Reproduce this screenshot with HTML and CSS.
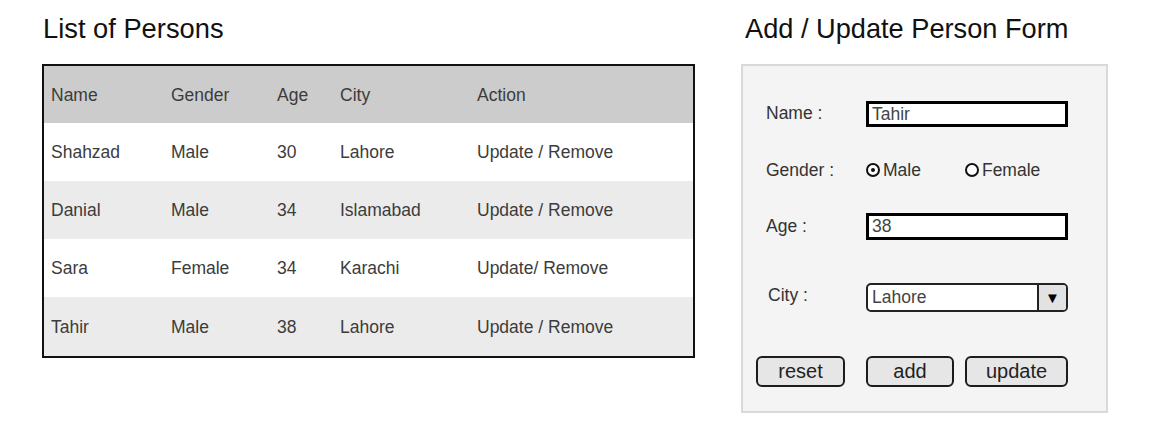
FILE: index.html
```html
<!DOCTYPE html>
<html>
<head>
<meta charset="utf-8">
<title>Persons</title>
<link rel="stylesheet" href="styles.css">
</head>
<body>
<div class="page">
  <section class="list">
    <h2 class="title">List of Persons</h2>
    <div class="table">
      <div class="row head">
        <div class="cell">Name</div><div class="cell">Gender</div><div class="cell">Age</div><div class="cell">City</div><div class="cell">Action</div>
      </div>
      <div class="row">
        <div class="cell">Shahzad</div><div class="cell">Male</div><div class="cell">30</div><div class="cell">Lahore</div><div class="cell">Update / Remove</div>
      </div>
      <div class="row alt">
        <div class="cell">Danial</div><div class="cell">Male</div><div class="cell">34</div><div class="cell">Islamabad</div><div class="cell">Update / Remove</div>
      </div>
      <div class="row">
        <div class="cell">Sara</div><div class="cell">Female</div><div class="cell">34</div><div class="cell">Karachi</div><div class="cell">Update/ Remove</div>
      </div>
      <div class="row alt last">
        <div class="cell">Tahir</div><div class="cell">Male</div><div class="cell">38</div><div class="cell">Lahore</div><div class="cell">Update / Remove</div>
      </div>
    </div>
  </section>
  <section class="formcol">
    <h2 class="title title-form">Add / Update Person Form</h2>
    <div class="panel">
      <div class="frow r-name">
        <span class="label">Name :</span>
        <div class="input">Tahir</div>
      </div>
      <div class="frow r-gender">
        <span class="label">Gender :</span>
        <span class="radio checked"></span><span class="rtext">Male</span>
        <span class="radio r2"></span><span class="rtext">Female</span>
      </div>
      <div class="frow r-age">
        <span class="label">Age :</span>
        <div class="input tall">38</div>
      </div>
      <div class="frow r-city">
        <span class="label city-label">City :</span>
        <div class="select"><span class="sel-text">Lahore</span><span class="sel-btn">&#9660;</span></div>
      </div>
      <div class="frow r-buttons">
        <span class="btn b-reset">reset</span>
        <span class="btn b-add">add</span>
        <span class="btn b-update">update</span>
      </div>
    </div>
  </section>
</div>
</body>
</html>
```

FILE: styles.css
```css
* { box-sizing: border-box; }
body {
  margin: 0;
  background: #ffffff;
  font-family: "Liberation Sans", Arial, sans-serif;
  color: #3c3c3c;
}
.page {
  display: flex;
  padding: 13px 0 0 42px;
  gap: 46px;
}
.title {
  margin: 0 0 20px 1px;
  font-size: 27.3px;
  line-height: 31px;
  font-weight: normal;
  color: #111;
}
.title-form {
  font-size: 27.2px;
  margin-left: 4px;
}
.list { width: 653px; }
.table {
  border: 2px solid #111;
}
.row {
  display: grid;
  grid-template-columns: 120px 106px 63px 137px 1fr;
  height: 58px;
  align-items: center;
  background: #ffffff;
  font-size: 17.5px;
  padding-top: 1px;
}
.row.head { height: 57px; background: #cccccc; }
.row.alt { background: #ebebeb; }
.row.last { height: 59px; }
.cell { padding-left: 7px; white-space: nowrap; }

.formcol { width: 367px; }
.panel {
  height: 349px;
  background: #f4f4f4;
  border: 2px solid #d9d9d9;
  padding: 35px 0 0 23px;
  font-size: 17.5px;
}
.frow {
  display: flex;
  align-items: center;
}
.label { width: 100px; color: #333; }
.city-label { padding-left: 2px; margin-top: -4px; }
.r-name { height: 26px; }
.r-gender { height: 26px; margin-top: 30px; }
.r-age { height: 27px; margin-top: 30px; }
.r-city { height: 29px; margin-top: 43px; }
.r-buttons { height: 31px; margin-top: 44px; margin-left: -10px; }
.input {
  width: 202px;
  height: 26px;
  border: 3px solid #000;
  background: #fff;
  padding-left: 3px;
  line-height: 20px;
  color: #444;
}
.input.tall { height: 27px; line-height: 21px; }
.r-name .label, .r-age .label { margin-top: -1px; }
.radio {
  flex: none;
  width: 14px;
  height: 14px;
  border: 2.5px solid #111;
  border-radius: 50%;
  background: #fff;
  position: relative;
  margin-right: 3px;
}
.radio.checked::after {
  content: "";
  position: absolute;
  left: 2.5px;
  top: 2.5px;
  width: 4px;
  height: 4px;
  border-radius: 50%;
  background: #111;
}
.radio.r2 { margin-left: 44px; }
.rtext { color: #333; }
.select {
  width: 202px;
  height: 29px;
  border: 2px solid #222;
  border-radius: 5px;
  background: #fff;
  display: flex;
  overflow: hidden;
}
.sel-text {
  flex: 1;
  padding-left: 4px;
  line-height: 25px;
  color: #444;
}
.sel-btn {
  width: 29px;
  border-left: 2px solid #222;
  background: #e2e2e2;
  color: #000;
  font-size: 15px;
  display: flex;
  align-items: center;
  justify-content: center;
}
.btn {
  height: 31px;
  border: 2px solid #1c1c1c;
  border-radius: 6px;
  background: #e6e6e6;
  display: flex;
  align-items: center;
  justify-content: center;
  font-size: 20px;
  color: #222;
}
.b-reset { width: 89px; }
.b-add { width: 88px; margin-left: 21px; }
.b-update { width: 103px; margin-left: 11px; }
```
